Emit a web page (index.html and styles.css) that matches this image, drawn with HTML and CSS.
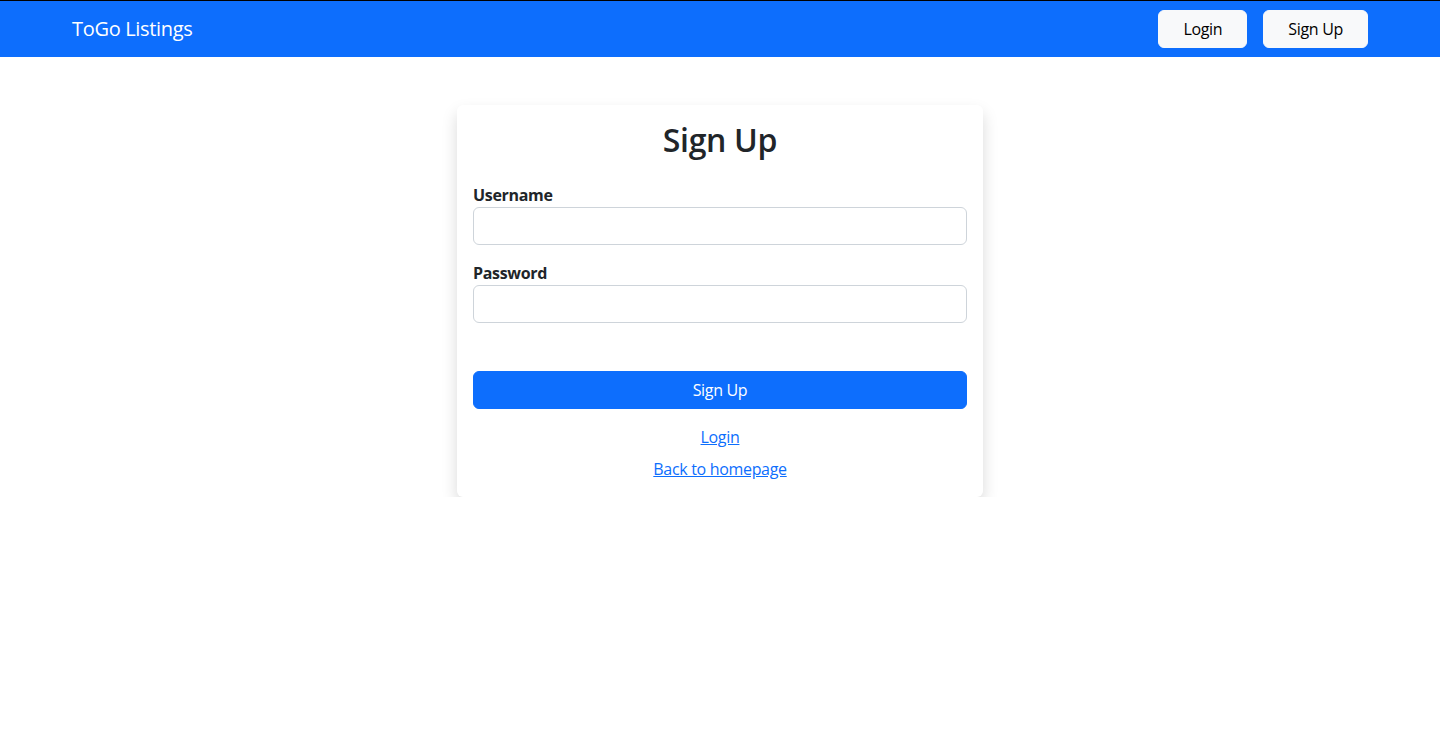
FILE: index.html
```html
<!DOCTYPE html>
<html lang="en">
<head>
    <meta charset="UTF-8">
    <title>ToGo Listings - Sign Up</title>
    <link rel="stylesheet" href="styles.css">
</head>
<body>
    <nav class="navbar">
        <div class="navContainer">
            <a class="brand" href="#">ToGo Listings</a>
            <div class="navButtons">
                <button class="navButton">Login</button>
                <button class="navButton">Sign Up</button>
            </div>
        </div>
    </nav>

    <div class="formCard">
        <h2 class="cardTitle">Sign Up</h2>
        <form>
            <div class="field">
                <label for="username">Username</label>
                <input type="text" id="username" class="textInput">
            </div>
            <div class="field">
                <label for="password">Password</label>
                <input type="password" id="password" class="textInput">
            </div>
            <button type="button" class="submitButton">Sign Up</button>
        </form>
        <div class="cardLinks">
            <a href="#">Login</a>
            <a href="#">Back to homepage</a>
        </div>
    </div>
</body>
</html>
```

FILE: styles.css
```css
body {
    font-family: "Segoe UI", "Open Sans", "Noto Sans", sans-serif;
    font-size: 16px;
    line-height: 1.5;
    letter-spacing: -0.02em;
    color: #212529;
    margin: 0;
    padding: 0;
    background-color: #fff;
    border-top: 1px solid #000;
}

.navbar {
    background-color: #0d6efd;
    padding: 8px 0;
}

.navContainer {
    max-width: 1296px;
    margin: 0 auto;
    padding: 0 12px;
    display: flex;
    align-items: center;
    justify-content: space-between;
}

.brand {
    color: #fff;
    font-size: 20px;
    line-height: 30px;
    padding: 5px 0;
    text-decoration: none;
}

.navButtons {
    display: flex;
    gap: 16px;
}

.navButton {
    font-family: inherit;
    font-size: 16px;
    line-height: 24px;
    letter-spacing: inherit;
    color: #000;
    background-color: #f8f9fa;
    border: 1px solid #f8f9fa;
    border-radius: 6px;
    padding: 6px 24px;
    cursor: pointer;
}

.formCard {
    width: 494px;
    margin: 48px auto 0;
    padding: 16px;
    background-color: #fff;
    border-radius: 6px;
    box-shadow: 0 8px 16px rgba(0, 0, 0, 0.15);
}

.cardTitle {
    font-size: 32px;
    font-weight: 600;
    line-height: 1.2;
    text-align: center;
    margin: 0 0 24px;
}

.field {
    margin-bottom: 16px;
}

.field label {
    display: block;
    font-weight: 700;
}

.textInput {
    display: block;
    box-sizing: border-box;
    width: 100%;
    height: 38px;
    padding: 6px 12px;
    font-family: inherit;
    font-size: 16px;
    border: 1px solid #ced4da;
    border-radius: 6px;
}

.submitButton {
    display: block;
    width: 100%;
    height: 38px;
    margin-top: 48px;
    font-family: inherit;
    font-size: 16px;
    letter-spacing: inherit;
    color: #fff;
    background-color: #0d6efd;
    border: 1px solid #0d6efd;
    border-radius: 6px;
    cursor: pointer;
}

.cardLinks {
    display: flex;
    flex-direction: column;
    align-items: center;
    gap: 8px;
    margin-top: 16px;
}

.cardLinks a {
    color: #0d6efd;
}
```
